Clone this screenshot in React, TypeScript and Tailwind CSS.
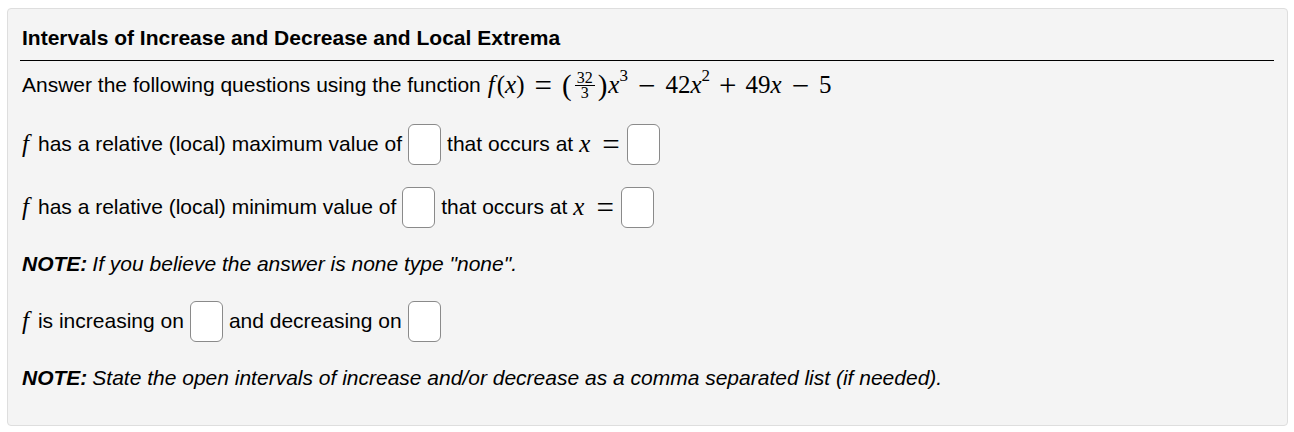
const serif = "font-['Liberation_Serif','Times_New_Roman',serif]";

function Box() {
  return (
    <span className="inline-block w-[33px] h-[41px] bg-white border border-[#8a8a8a] rounded-[6px] align-middle mx-[6px]" />
  );
}

function F() {
  return <span className={`${serif} italic text-[25px] mr-[9px]`}>f</span>;
}

function X() {
  return <span className={`${serif} italic text-[25px]`}>x</span>;
}

function Op({ c, cls = "mx-[8px]" }: { c: string; cls?: string }) {
  return <span className={`${serif} text-[31px] leading-none ${cls}`}>{c}</span>;
}

export default function App() {
  return (
    <div className="w-[1294px] h-[432px] bg-white pt-[8px] pl-[7px] font-['Liberation_Sans',Arial,sans-serif] text-black">
      <div className="w-[1281px] h-[418px] bg-[#f4f4f4] border border-[#dedede] rounded-[4px] pl-[12px] pr-[13px]">
        <h1 className="pl-[2px] pt-[15px] pb-[9px] text-[21px] font-bold leading-[27px] border-b border-black">
          Intervals of Increase and Decrease and Local Extrema
        </h1>

        <p className="pl-[2px] mt-[9px] flex items-center h-[30px] text-[21px]">
          <span>Answer the following questions using the function</span>
          <span className={`${serif} text-[25px] ml-[7px] flex items-center`}>
            <span className="italic">f</span>
            <span className="ml-[2px]">(</span>
            <span className="italic">x</span>
            <span>)</span>
            <Op c="=" cls="mx-[10px]" />
            <span className="text-[29px] leading-none">(</span>
            <span className="inline-flex flex-col items-center text-[16px] leading-[14px] mx-[3px]">
              <span className="border-b border-black px-[2px]">32</span>
              <span>3</span>
            </span>
            <span className="text-[29px] leading-none">)</span>
            <span className="italic ml-[1px]">x</span>
            <sup className="text-[17px] -top-[9px] relative">3</sup>
            <Op c="−" cls="mx-[10px]" />
            <span>42</span>
            <span className="italic">x</span>
            <sup className="text-[17px] -top-[9px] relative">2</sup>
            <Op c="+" cls="mx-[9px]" />
            <span>49</span>
            <span className="italic">x</span>
            <Op c="−" cls="mx-[10px]" />
            <span>5</span>
          </span>
        </p>

        <p className="pl-[2px] mt-[23px] flex items-center h-[42px] text-[21px]">
          <F />
          <span>has a relative (local) maximum value of</span>
          <Box />
          <span>that occurs at</span>
          <span className="ml-[6px]"><X /></span>
          <Op c="=" cls="ml-[12px] mr-[1px]" />
          <Box />
        </p>

        <p className="pl-[2px] mt-[21px] flex items-center h-[42px] text-[21px]">
          <F />
          <span>has a relative (local) minimum value of</span>
          <Box />
          <span>that occurs at</span>
          <span className="ml-[6px]"><X /></span>
          <Op c="=" cls="ml-[12px] mr-[1px]" />
          <Box />
        </p>

        <p className="pl-[2px] mt-[21px] h-[30px] flex items-center text-[21px] italic">
          <b className="mr-[5px]">NOTE:</b>
          <span>If you believe the answer is none type "none".</span>
        </p>

        <p className="pl-[2px] mt-[21px] flex items-center h-[42px] text-[21px]">
          <F />
          <span>is increasing on</span>
          <Box />
          <span>and decreasing on</span>
          <Box />
        </p>

        <p className="pl-[2px] mt-[21px] h-[30px] flex items-center text-[21px] italic">
          <b className="mr-[5px]">NOTE:</b>
          <span>State the open intervals of increase and/or decrease as a comma separated list (if needed).</span>
        </p>
      </div>
    </div>
  );
}
